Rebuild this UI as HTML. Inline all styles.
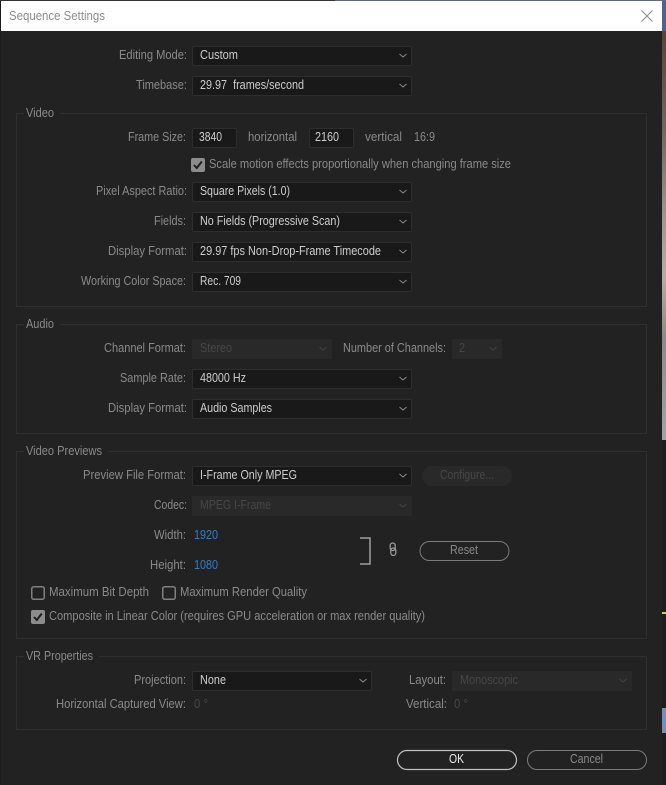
<!DOCTYPE html>
<html><head><meta charset="utf-8"><style>
html,body{margin:0;padding:0;background:#1c1c1c;width:666px;height:785px;overflow:hidden}
svg{display:block}
text{font-family:"Liberation Sans",sans-serif;font-size:12.5px}
.t{filter:blur(.25px)}
.l{fill:#8a8a8a}.v{fill:#cdcdcd}.d{fill:#474747}.b{fill:#2a7fd4}
.dd{fill:#191919;stroke:#2e2e2e}.dis{fill:#292929}
.grp{fill:none;stroke:#303030}
</style></head><body>
<svg width="666" height="785" viewBox="0 0 666 785" xmlns="http://www.w3.org/2000/svg">
<defs><linearGradient id="st" x1="0" y1="0" x2="0" y2="1"><stop offset="0" stop-color="#5a4234"/><stop offset=".25" stop-color="#75675c"/><stop offset=".45" stop-color="#9a968f"/><stop offset=".6" stop-color="#b5ae9f"/><stop offset=".75" stop-color="#8c8a85"/><stop offset="1" stop-color="#a3a3a6"/></linearGradient></defs>
<rect width="666" height="785" fill="#222"/>
<rect x="0" width="1" height="785" fill="#1b1b1b"/>
<rect x="0" y="0" width="335" height="1" fill="#333"/>
<rect x="335" y="0" width="331" height="1" fill="#5d6a86"/>
<rect x="1" y="1" width="661" height="30" fill="#fff"/>
<rect x="662" y="1" width="4" height="30" fill="#4d6296"/>
<rect x="662" y="31" width="4" height="409" fill="url(#st)"/>
<rect x="662" y="440" width="4" height="345" fill="#1e1e1e"/>
<rect x="662" y="612" width="4" height="2" fill="#dcd320"/>
<rect x="662" y="708" width="4" height="25" fill="#6f8fc4"/>
<text x="9" y="20" textLength="96" lengthAdjust="spacingAndGlyphs" fill="#8c8c8c">Sequence Settings</text>
<path d="M641.500 10.500L652.500 21.500M652.500 10.500L641.500 21.500" stroke="#8a8a8a" stroke-width="1" fill="none"/>

<!-- groups -->
<path class="grp" d="M24 113.500H16.500V306.500H646.500V113.500H60"/>
<path class="grp" d="M24 324.500H16.500V433.500H646.500V324.500H60"/>
<path class="grp" d="M24 451.500H16.500V638.500H646.500V451.500H108"/>
<path class="grp" d="M24 656.500H16.500V729.500H646.500V656.500H99"/>

<!-- dropdown boxes -->
<rect class="dd" x="192.500" y="46.500" width="219" height="19" rx="1.500"/>
<rect class="dd" x="192.500" y="76.500" width="219" height="19" rx="1.500"/>
<rect class="dd" x="192.500" y="128.500" width="44" height="19" rx="1.500"/>
<rect class="dd" x="309.500" y="128.500" width="44" height="19" rx="1.500"/>
<rect class="dd" x="192.500" y="182.500" width="219" height="19" rx="1.500"/>
<rect class="dd" x="192.500" y="212.500" width="219" height="19" rx="1.500"/>
<rect class="dd" x="192.500" y="242.500" width="219" height="19" rx="1.500"/>
<rect class="dd" x="192.500" y="272.500" width="219" height="19" rx="1.500"/>
<rect class="dis" x="192" y="339" width="140" height="20" rx="1.500"/>
<rect class="dis" x="452" y="339" width="50" height="20" rx="1.500"/>
<rect class="dd" x="192.500" y="369.500" width="219" height="19" rx="1.500"/>
<rect class="dd" x="192.500" y="399.500" width="219" height="19" rx="1.500"/>
<rect class="dd" x="192.500" y="466.500" width="219" height="19" rx="1.500"/>
<rect class="dis" x="192" y="496" width="220" height="20" rx="1.500"/>
<rect class="dis" x="422" y="466" width="90" height="20" rx="10"/>
<rect class="dd" x="192.500" y="671.500" width="179" height="19" rx="1.500"/>
<rect class="dis" x="452" y="671" width="180" height="20" rx="1.500"/>

<!-- chevrons -->
<g fill="none" stroke="#8f8f8f" stroke-width=".9">
<path d="M399.500 54l3.500 3 3.500-3M399.500 84l3.500 3 3.500-3M399.500 190l3.500 3 3.500-3M399.500 220l3.500 3 3.500-3M399.500 250l3.500 3 3.500-3M399.500 280l3.500 3 3.500-3M399.500 377l3.500 3 3.500-3M399.500 407l3.500 3 3.500-3M399.500 474l3.500 3 3.500-3M359.500 679l3.500 3 3.500-3"/>
</g>
<g fill="none" stroke="#434343" stroke-width=".9">
<path d="M319.500 347l3.500 3 3.500-3M489.500 347l3.500 3 3.500-3M399.500 504l3.500 3 3.500-3M619.500 679l3.500 3 3.500-3"/>
</g>

<g class="t" transform="translate(0,-1)">
<g class="l">
<text x="26" y="118" textLength="28" lengthAdjust="spacingAndGlyphs">Video</text>
<text x="26" y="329" textLength="28" lengthAdjust="spacingAndGlyphs">Audio</text>
<text x="26" y="456" textLength="76" lengthAdjust="spacingAndGlyphs">Video Previews</text>
<text x="26" y="661" textLength="67" lengthAdjust="spacingAndGlyphs">VR Properties</text>
<text x="119" y="60" textLength="68" lengthAdjust="spacingAndGlyphs">Editing Mode:</text>
<text x="136" y="90" textLength="51" lengthAdjust="spacingAndGlyphs">Timebase:</text>
<text x="128" y="142" textLength="58" lengthAdjust="spacingAndGlyphs">Frame Size:</text>
<text x="248" y="142" textLength="49" lengthAdjust="spacingAndGlyphs">horizontal</text>
<text x="365" y="142" textLength="37" lengthAdjust="spacingAndGlyphs">vertical</text>
<text x="414" y="142" textLength="21" lengthAdjust="spacingAndGlyphs">16:9</text>
<text x="209" y="169" textLength="302" lengthAdjust="spacingAndGlyphs">Scale motion effects proportionally when changing frame size</text>
<text x="96" y="196" textLength="91" lengthAdjust="spacingAndGlyphs">Pixel Aspect Ratio:</text>
<text x="154" y="226" textLength="32" lengthAdjust="spacingAndGlyphs">Fields:</text>
<text x="108" y="256" textLength="79" lengthAdjust="spacingAndGlyphs">Display Format:</text>
<text x="81" y="286" textLength="105" lengthAdjust="spacingAndGlyphs">Working Color Space:</text>
<text x="104" y="353" textLength="82" lengthAdjust="spacingAndGlyphs">Channel Format:</text>
<text x="343" y="353" textLength="103" lengthAdjust="spacingAndGlyphs">Number of Channels:</text>
<text x="120" y="383" textLength="66" lengthAdjust="spacingAndGlyphs">Sample Rate:</text>
<text x="108" y="413" textLength="79" lengthAdjust="spacingAndGlyphs">Display Format:</text>
<text x="83" y="480" textLength="103" lengthAdjust="spacingAndGlyphs">Preview File Format:</text>
<text x="154" y="510" textLength="33" lengthAdjust="spacingAndGlyphs">Codec:</text>
<text x="154" y="540" textLength="32" lengthAdjust="spacingAndGlyphs">Width:</text>
<text x="150" y="570" textLength="36" lengthAdjust="spacingAndGlyphs">Height:</text>
<text x="49" y="597" textLength="100" lengthAdjust="spacingAndGlyphs">Maximum Bit Depth</text>
<text x="180" y="597" textLength="127" lengthAdjust="spacingAndGlyphs">Maximum Render Quality</text>
<text x="49" y="621" textLength="376" lengthAdjust="spacingAndGlyphs">Composite in Linear Color (requires GPU acceleration or max render quality)</text>
<text x="134" y="685" textLength="52" lengthAdjust="spacingAndGlyphs">Projection:</text>
<text x="409" y="685" textLength="37" lengthAdjust="spacingAndGlyphs">Layout:</text>
<text x="56" y="709" textLength="130" lengthAdjust="spacingAndGlyphs">Horizontal Captured View:</text>
<text x="406" y="709" textLength="41" lengthAdjust="spacingAndGlyphs">Vertical:</text>
<text x="450" y="555" textLength="28" lengthAdjust="spacingAndGlyphs">Reset</text>
<text x="570" y="764" textLength="33" lengthAdjust="spacingAndGlyphs">Cancel</text>
</g>
<g class="v">
<text x="200" y="60" textLength="38" lengthAdjust="spacingAndGlyphs">Custom</text>
<text x="200" y="90" textLength="104" lengthAdjust="spacingAndGlyphs" xml:space="preserve">29.97  frames/second</text>
<text x="199" y="142" textLength="23" lengthAdjust="spacingAndGlyphs">3840</text>
<text x="315" y="142" textLength="24" lengthAdjust="spacingAndGlyphs">2160</text>
<text x="200" y="196" textLength="90" lengthAdjust="spacingAndGlyphs">Square Pixels (1.0)</text>
<text x="200" y="226" textLength="140" lengthAdjust="spacingAndGlyphs">No Fields (Progressive Scan)</text>
<text x="200" y="256" textLength="181" lengthAdjust="spacingAndGlyphs">29.97 fps Non-Drop-Frame Timecode</text>
<text x="200" y="286" textLength="41" lengthAdjust="spacingAndGlyphs">Rec. 709</text>
<text x="200" y="383" textLength="46" lengthAdjust="spacingAndGlyphs">48000 Hz</text>
<text x="200" y="413" textLength="72" lengthAdjust="spacingAndGlyphs">Audio Samples</text>
<text x="200" y="480" textLength="97" lengthAdjust="spacingAndGlyphs">I-Frame Only MPEG</text>
<text x="200" y="685" textLength="26" lengthAdjust="spacingAndGlyphs">None</text>
<text x="449" y="764" textLength="15" lengthAdjust="spacingAndGlyphs" style="fill:#eee">OK</text>
</g>
<g class="d">
<text x="200" y="353" textLength="32" lengthAdjust="spacingAndGlyphs">Stereo</text>
<text x="459" y="353" textLength="6" lengthAdjust="spacingAndGlyphs">2</text>
<text x="440" y="480" textLength="54" lengthAdjust="spacingAndGlyphs">Configure...</text>
<text x="200" y="510" textLength="71" lengthAdjust="spacingAndGlyphs">MPEG I-Frame</text>
<text x="460" y="685" textLength="58" lengthAdjust="spacingAndGlyphs">Monoscopic</text>
<text x="194" y="709" textLength="14" lengthAdjust="spacingAndGlyphs" xml:space="preserve">0 °</text>
<text x="454" y="709" textLength="14" lengthAdjust="spacingAndGlyphs" xml:space="preserve">0 °</text>
</g>
<text x="194" y="540" textLength="24" lengthAdjust="spacingAndGlyphs" class="b">1920</text>
<text x="194" y="570" textLength="24" lengthAdjust="spacingAndGlyphs" class="b">1080</text>
</g>

<!-- checkboxes -->
<rect x="191" y="158" width="14" height="14" rx="2" fill="#8c8c8c"/>
<path d="M194 165l2.800 3 5-6.500" fill="none" stroke="#1f1f1f" stroke-width="2"/>
<rect x="31.750" y="586.750" width="12.500" height="12.500" rx="2" fill="none" stroke="#808080" stroke-width="1.500"/>
<rect x="162.750" y="586.750" width="12.500" height="12.500" rx="2" fill="none" stroke="#808080" stroke-width="1.500"/>
<rect x="31" y="610" width="14" height="14" rx="2" fill="#8c8c8c"/>
<path d="M34 617l2.800 3 5-6.500" fill="none" stroke="#1f1f1f" stroke-width="2"/>

<!-- bracket, link -->
<path d="M360 538H370V564H360" fill="none" stroke="#a0a0a0" stroke-width="1.500"/>
<g fill="none" stroke="#a0a0a0" stroke-width="1.200">
<rect x="390.200" y="543" width="5" height="7.500" rx="2.500"/>
<rect x="390.800" y="548" width="5" height="7.500" rx="2.500"/>
</g>

<!-- buttons -->
<rect x="420" y="541.500" width="89" height="19" rx="9.500" fill="none" stroke="#7c7c7c"/>
<rect x="397.500" y="750.500" width="119" height="19" rx="9.500" fill="none" stroke="#c0c0c0" stroke-width="1.200"/>
<rect x="527.500" y="750.500" width="119" height="19" rx="9.500" fill="none" stroke="#7c7c7c"/>
</svg>
</body></html>
